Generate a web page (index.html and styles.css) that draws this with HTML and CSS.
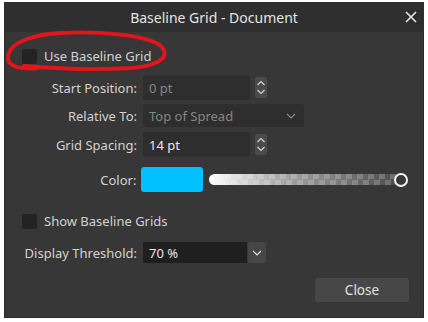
FILE: index.html
```html
<!DOCTYPE html>
<html lang="en">
<head>
  <meta charset="UTF-8">
  <title>Baseline Grid - Document</title>
  <link rel="stylesheet" href="styles.css">
</head>
<body>

  <div class="dialog">
    <div class="titlebar">
      <span></span>
      <span class="title">Baseline Grid - Document</span>
      <svg class="close-x" width="12" height="12" viewBox="0 0 12 12">
        <path d="M1 1 L11 11 M11 1 L1 11" stroke="#e6e6e6" stroke-width="1.6" fill="none"/>
      </svg>
    </div>

    <div class="content">
      <div class="check-row row-use">
        <span class="box"></span>
        <span>Use Baseline Grid</span>
      </div>

      <div class="field-row row-start">
        <span class="label">Start Position:</span>
        <div class="input disabled">0 pt</div>
        <div class="spinner">
          <svg width="12" height="21" viewBox="0 0 12 21">
            <path d="M2.5 8 L6 4.5 L9.5 8 M2.5 13 L6 16.5 L9.5 13" stroke="#d8d8d8" stroke-width="1.1" fill="none"/>
          </svg>
        </div>
      </div>

      <div class="field-row row-relative">
        <span class="label">Relative To:</span>
        <div class="select disabled">
          <span>Top of Spread</span>
          <svg width="10" height="6" viewBox="0 0 10 6">
            <path d="M1 1 L5 5 L9 1" stroke="#8c8c8c" stroke-width="1.1" fill="none"/>
          </svg>
        </div>
      </div>

      <div class="field-row row-spacing">
        <span class="label">Grid Spacing:</span>
        <div class="input">14 pt</div>
        <div class="spinner">
          <svg width="12" height="21" viewBox="0 0 12 21">
            <path d="M2.5 8 L6 4.5 L9.5 8 M2.5 13 L6 16.5 L9.5 13" stroke="#d8d8d8" stroke-width="1.1" fill="none"/>
          </svg>
        </div>
      </div>

      <div class="field-row row-color">
        <span class="label">Color:</span>
        <div class="swatch"></div>
        <div class="slider">
          <div class="track"></div>
          <span class="handle"></span>
        </div>
      </div>

      <div class="check-row row-show">
        <span class="box"></span>
        <span>Show Baseline Grids</span>
      </div>

      <div class="field-row row-threshold">
        <span class="label">Display Threshold:</span>
        <div class="input dark">70 %</div>
        <div class="drop-btn">
          <svg width="10" height="6" viewBox="0 0 10 6">
            <path d="M1 1 L5 5 L9 1" stroke="#e0e0e0" stroke-width="1.2" fill="none"/>
          </svg>
        </div>
      </div>
    </div>

    <div class="footer">
      <button class="close-button">Close</button>
    </div>

    <!-- hand drawn marker round the checkbox -->
    <svg class="annotation" width="428" height="322" viewBox="0 0 428 322">
      <path d="M38 68 C22 70 7 67 8 57 C9 44 28 35 60 33 C100 31 148 35 161 46 C170 55 163 65 132 68 C100 70 60 69 24 66"
            stroke="#e3141b" stroke-width="3.8" fill="none" stroke-linecap="round"/>
    </svg>
  </div>

</body>
</html>
```

FILE: styles.css
```css
/* General */
body {
  margin: 0;
  background-color: #ffffff;
  font-family: "Noto Sans", "Open Sans", sans-serif;
  font-size: 13px;
  color: #d2d2d2;
}

/* Dialog frame */
.dialog {
  position: relative;
  margin: 2px 0 0 4px;
  width: 420px;
  height: 316px;
  background-color: #373737;
  box-shadow: inset 0 0 0 1px #2a2a2a;
  display: flex;
  flex-direction: column;
}

.titlebar {
  height: 30px;
  background-color: #2f2f2f;
  display: grid;
  grid-template-columns: 1fr auto 1fr;
  align-items: center;
}

.title {
  font-size: 14px;
  color: #e4e4e4;
}

.close-x {
  justify-self: end;
  margin-right: 7px;
}

/* Rows */
.content {
  padding: 0 18px;
  display: flex;
  flex-direction: column;
}

.check-row {
  height: 20px;
  display: flex;
  align-items: center;
  gap: 7px;
}

.box {
  width: 15px;
  height: 15px;
  border-radius: 2px;
  background-color: #232323;
}

.field-row {
  display: flex;
  align-items: center;
}

.label {
  width: 115px;
  margin-right: 6px;
  text-align: right;
}

.row-use { margin-top: 14px; }
.row-start { margin-top: 9px; height: 25px; }
.row-relative { margin-top: 4px; height: 23px; }
.row-spacing { margin-top: 5px; height: 25px; }
.row-color { margin-top: 10px; height: 25px; }
.row-show { margin-top: 19px; }
.row-threshold { margin-top: 11px; height: 21px; }

/* Inputs */
.input {
  width: 101px;
  height: 100%;
  padding-left: 6px;
  border-radius: 3px;
  background-color: #2e2e2e;
  color: #e8e8e8;
  display: flex;
  align-items: center;
}

.input.disabled,
.select.disabled {
  color: #858585;
}

.input.dark {
  width: 98px;
  border-radius: 0;
  background-color: #1f1f1f;
}

.spinner {
  margin-left: 5px;
  width: 12px;
  height: 21px;
  border-radius: 2px;
  background-color: #4a4a4a;
}

.spinner svg {
  display: block;
}

.select {
  width: 161px;
  height: 100%;
  padding: 0 8px 0 6px;
  box-sizing: border-box;
  border-radius: 3px;
  background-color: #2e2e2e;
  display: flex;
  align-items: center;
  justify-content: space-between;
}

.drop-btn {
  margin-left: 1px;
  width: 18px;
  height: 100%;
  border-radius: 2px;
  background-color: #464646;
  display: flex;
  align-items: center;
  justify-content: center;
}

/* Colour */
.swatch {
  width: 62px;
  height: 25px;
  margin-left: -1px;
  border-radius: 3px;
  background-color: #00c1fd;
}

.slider {
  position: relative;
  margin-left: 6px;
  width: 198px;
  height: 25px;
  display: flex;
  align-items: center;
}

.track {
  width: 192px;
  height: 11px;
  border-radius: 6px 0 0 6px;
  background:
    linear-gradient(to right, rgba(255, 255, 255, 1), rgba(255, 255, 255, 0.55) 35%, rgba(255, 255, 255, 0)),
    repeating-conic-gradient(#686868 0 25%, #474747 0 50%) 0 0 / 11px 11px;
}

.handle {
  position: absolute;
  left: 185px;
  top: 6px;
  width: 10px;
  height: 10px;
  border: 2px solid #f4f4f4;
  border-radius: 50%;
  background-color: #383838;
}

/* Footer */
.footer {
  margin-top: 15px;
  padding-right: 15px;
  display: flex;
  justify-content: flex-end;
}

.close-button {
  width: 94px;
  height: 24px;
  border: none;
  border-radius: 3px;
  background-color: #474747;
  color: #e2e2e2;
  font-family: "Noto Sans", "Open Sans", sans-serif;
  font-size: 13.5px;
}

/* Red marker */
.annotation {
  position: absolute;
  left: -4px;
  top: -2px;
  pointer-events: none;
}
```
